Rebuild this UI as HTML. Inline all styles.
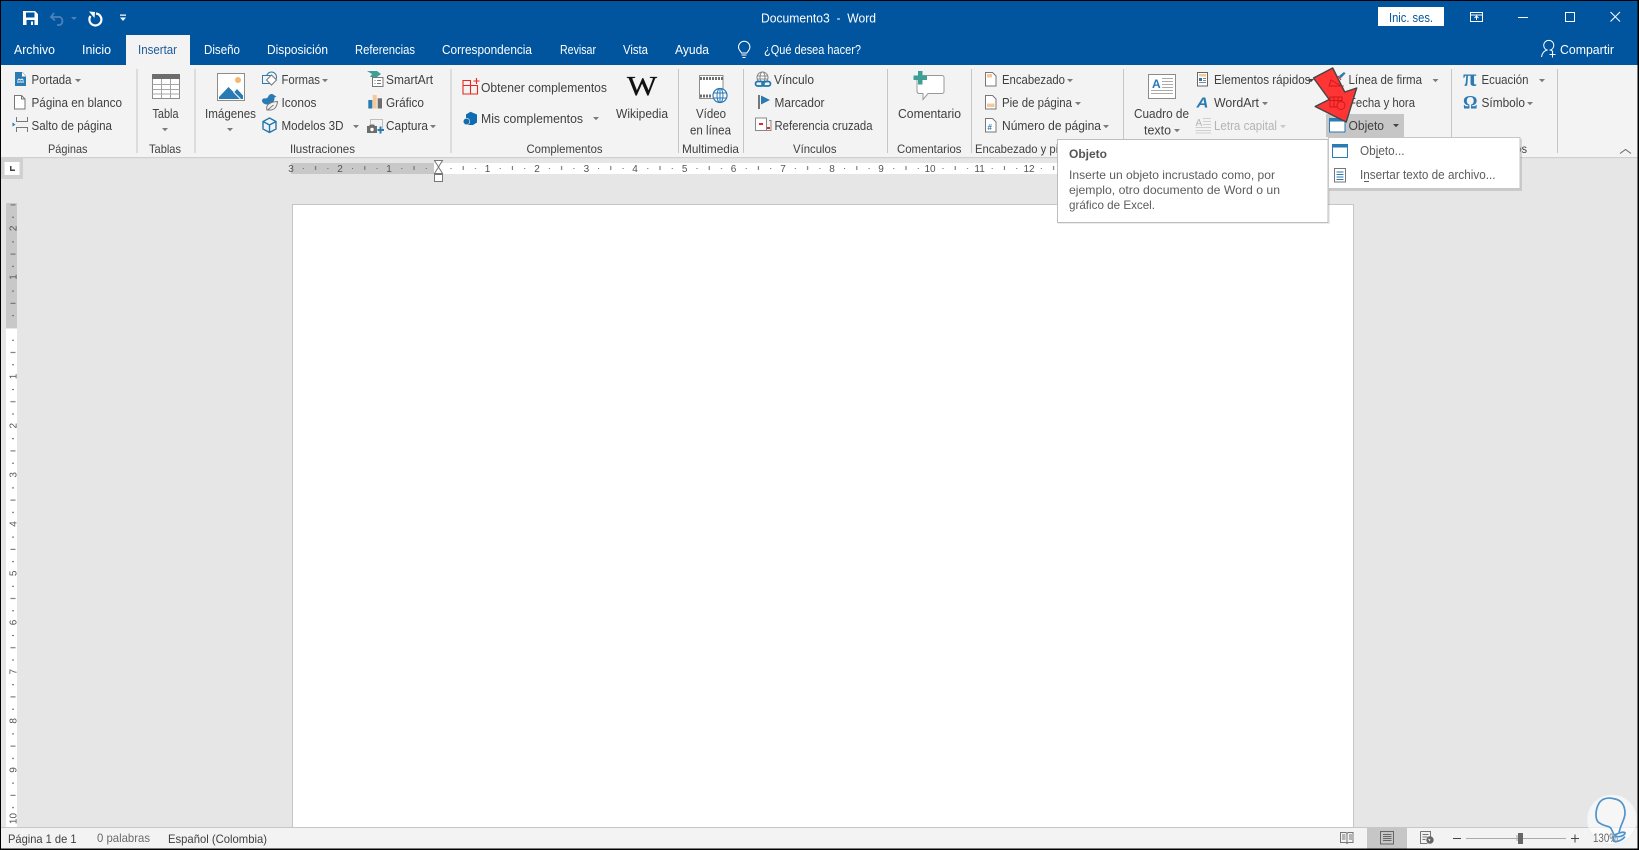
<!DOCTYPE html>
<html lang="es"><head><meta charset="utf-8"><title>Documento3 - Word</title>
<style>
html,body{margin:0;padding:0;background:#000;width:1639px;height:850px;overflow:hidden}
svg{display:block;filter:blur(.3px)}
text{font-family:"Liberation Sans",sans-serif;font-size:12.5px;fill:#404040}
.w text{fill:#fff}
.l text{fill:#404040;font-size:12px}
.d{fill:#7b7b7b}
.g{stroke:#777;fill:#fff;stroke-width:1}
.r text{font-size:10px;fill:#555;text-anchor:middle}
</style></head><body>
<svg xmlns="http://www.w3.org/2000/svg" width="1639" height="850" viewBox="0 0 1639 850">
<defs>
<pattern id="ht" patternUnits="userSpaceOnUse" x="438.5" y="160" width="49.2" height="20">
<rect x="12" y="8" width="1" height="1" fill="#666"/><rect x="24.2" y="6" width="1" height="4" fill="#666"/><rect x="36.5" y="8" width="1" height="1" fill="#666"/>
</pattern>
<pattern id="vt" patternUnits="userSpaceOnUse" x="0" y="327.8" width="20" height="49.2">
<rect x="12" y="12" width="2" height="1" fill="#666"/><rect x="10.5" y="24.2" width="5" height="1" fill="#666"/><rect x="12" y="36.5" width="2" height="1" fill="#666"/>
</pattern>
</defs>

<!-- base -->
<rect x="0" y="0" width="1639" height="850" fill="#000"/>
<rect x="1" y="1" width="1636.5" height="847.5" fill="#e6e6e6"/>
<rect x="1" y="1" width="1636.5" height="64" fill="#01559f"/>
<rect x="1" y="65" width="1636.5" height="92" fill="#f3f3f3"/>
<rect x="1" y="157" width="1636.5" height="1.2" fill="#cfcfcf"/>
<rect x="126" y="35" width="64" height="31" fill="#f3f3f3"/>

<!-- QAT -->
<path d="M23 11h12l3 3v11H23z" fill="#fff"/><rect x="26" y="12.5" width="8.5" height="5" fill="#01559f"/><rect x="26.5" y="20" width="8" height="5" fill="#01559f"/><rect x="31" y="21.5" width="2" height="3.5" fill="#fff"/>
<path d="M54 13l-3 4 4 3.5M52 17h8a4.5 4.500 0 0 1 0 8h-3" fill="none" stroke="#4f81b9" stroke-width="1.8"/>
<path d="M71 17h6l-3 3z" fill="#4f81b9"/>
<path d="M96 13.5a6 6 0 1 1-5.500 2.500" fill="none" stroke="#fff" stroke-width="2.200"/><path d="M89 11.500l6 .5-.5 6z" fill="#fff"/>
<path d="M120 14.500h6v1.300h-6zM120 17.500h6l-3 3.500z" fill="#fff"/>

<!-- tabs -->
<g class="w">
<text x="14" y="54" textLength="41" lengthAdjust="spacingAndGlyphs">Archivo</text>
<text x="82" y="54" textLength="29" lengthAdjust="spacingAndGlyphs">Inicio</text>
<text x="204" y="54" textLength="36" lengthAdjust="spacingAndGlyphs">Diseño</text>
<text x="267" y="54" textLength="61" lengthAdjust="spacingAndGlyphs">Disposición</text>
<text x="355" y="54" textLength="60" lengthAdjust="spacingAndGlyphs">Referencias</text>
<text x="442" y="54" textLength="90" lengthAdjust="spacingAndGlyphs">Correspondencia</text>
<text x="560" y="54" textLength="36" lengthAdjust="spacingAndGlyphs">Revisar</text>
<text x="623" y="54" textLength="25" lengthAdjust="spacingAndGlyphs">Vista</text>
<text x="675" y="54" textLength="34" lengthAdjust="spacingAndGlyphs">Ayuda</text>
<text x="764" y="54" textLength="97" lengthAdjust="spacingAndGlyphs">¿Qué desea hacer?</text>
<text x="761" y="22.500" textLength="115" lengthAdjust="spacingAndGlyphs" xml:space="preserve">Documento3  -  Word</text>
<text x="1560" y="54" textLength="54" lengthAdjust="spacingAndGlyphs">Compartir</text>
</g>
<text x="138" y="54" textLength="39" lengthAdjust="spacingAndGlyphs" style="fill:#1c5a9c">Insertar</text>

<path d="M741.500 53c-1-2-3-3-3-6a5.700 5.700 0 0 1 11.400 0c0 3-2 4-3 6zM741.500 55h5M742.500 57.500h3" fill="none" stroke="#fff" stroke-width="1"/>

<!-- top-right -->
<rect x="1378" y="7" width="66" height="19" fill="#fff"/>
<text x="1389" y="22" textLength="44" lengthAdjust="spacingAndGlyphs" style="fill:#01559f">Inic. ses.</text>
<path d="M1470.500 12.500h12v9h-12zM1470.500 15h12" fill="none" stroke="#fff"/><path d="M1476.500 20v-3.500M1474.500 18l2-2 2 2" fill="none" stroke="#fff"/>
<rect x="1518" y="17" width="10" height="1" fill="#fff"/>
<rect x="1565.500" y="12.500" width="9" height="9" fill="none" stroke="#fff"/>
<path d="M1610.500 12l9.500 9.500M1620 12l-9.500 9.500" stroke="#fff" fill="none"/>
<path d="M1541.500 57c1-5 3-6 5.500-7a5 5 0 1 1 3.500 0c1 .3 2 1 2.500 1.700" fill="none" stroke="#fff"/><path d="M1549.500 54.500h6M1552.500 51.500v6" stroke="#fff" fill="none"/>

<!-- separators -->
<g fill="#c6c6c6">
<rect x="136.500" y="69" width="1" height="84"/><rect x="194.500" y="69" width="1" height="84"/><rect x="450.500" y="69" width="1" height="84"/><rect x="678" y="69" width="1" height="84"/><rect x="743" y="69" width="1" height="84"/><rect x="887" y="69" width="1" height="84"/><rect x="971" y="69" width="1" height="84"/><rect x="1123" y="69" width="1" height="84"/><rect x="1451" y="69" width="1" height="84"/><rect x="1557" y="69" width="1" height="84"/>
</g>

<!-- Ribbon text -->
<g>
<text x="31.500" y="84" textLength="40" lengthAdjust="spacingAndGlyphs">Portada</text>
<text x="31.500" y="107" textLength="90.500" lengthAdjust="spacingAndGlyphs">Página en blanco</text>
<text x="31.500" y="130" textLength="80.500" lengthAdjust="spacingAndGlyphs">Salto de página</text>
<text x="152.500" y="118" textLength="26" lengthAdjust="spacingAndGlyphs">Tabla</text>
<text x="205" y="118" textLength="51" lengthAdjust="spacingAndGlyphs">Imágenes</text>
<text x="281.500" y="84" textLength="38.500" lengthAdjust="spacingAndGlyphs">Formas</text>
<text x="281.500" y="107" textLength="35" lengthAdjust="spacingAndGlyphs">Iconos</text>
<text x="281.500" y="130" textLength="62" lengthAdjust="spacingAndGlyphs">Modelos 3D</text>
<text x="386" y="84" textLength="47" lengthAdjust="spacingAndGlyphs">SmartArt</text>
<text x="386" y="107" textLength="38" lengthAdjust="spacingAndGlyphs">Gráfico</text>
<text x="386" y="130" textLength="42" lengthAdjust="spacingAndGlyphs">Captura</text>
<text x="481" y="92" textLength="126" lengthAdjust="spacingAndGlyphs">Obtener complementos</text>
<text x="481" y="123" textLength="102" lengthAdjust="spacingAndGlyphs">Mis complementos</text>
<text x="616" y="118" textLength="52" lengthAdjust="spacingAndGlyphs">Wikipedia</text>
<text x="627" y="95" textLength="30" lengthAdjust="spacingAndGlyphs" style="font-family:'Liberation Serif',serif;font-size:27px;fill:#111;stroke:#111;stroke-width:.35">W</text>
<text x="696" y="118" textLength="30" lengthAdjust="spacingAndGlyphs">Vídeo</text>
<text x="690" y="134.500" textLength="41" lengthAdjust="spacingAndGlyphs">en línea</text>
<text x="774" y="84" textLength="40" lengthAdjust="spacingAndGlyphs">Vínculo</text>
<text x="774.500" y="107" textLength="50" lengthAdjust="spacingAndGlyphs">Marcador</text>
<text x="774.500" y="130" textLength="98" lengthAdjust="spacingAndGlyphs">Referencia cruzada</text>
<text x="898" y="118" textLength="63" lengthAdjust="spacingAndGlyphs">Comentario</text>
<text x="1002" y="84" textLength="63" lengthAdjust="spacingAndGlyphs">Encabezado</text>
<text x="1002" y="107" textLength="70" lengthAdjust="spacingAndGlyphs">Pie de página</text>
<text x="1002" y="130" textLength="99" lengthAdjust="spacingAndGlyphs">Número de página</text>
<text x="1134" y="118" textLength="55" lengthAdjust="spacingAndGlyphs">Cuadro de</text>
<text x="1144" y="134.500" textLength="27" lengthAdjust="spacingAndGlyphs">texto</text>
<text x="1214" y="84" textLength="96.500" lengthAdjust="spacingAndGlyphs">Elementos rápidos</text>
<text x="1214" y="107" textLength="45" lengthAdjust="spacingAndGlyphs">WordArt</text>
<text x="1214" y="130" textLength="63" lengthAdjust="spacingAndGlyphs" style="fill:#b4b4b4">Letra capital</text>
<text x="1348.500" y="84" textLength="73.500" lengthAdjust="spacingAndGlyphs">Línea de firma</text>
<text x="1349" y="107" textLength="66" lengthAdjust="spacingAndGlyphs">Fecha y hora</text>
<text x="1481.500" y="84" textLength="47" lengthAdjust="spacingAndGlyphs">Ecuación</text>
<text x="1481.500" y="107" textLength="43.500" lengthAdjust="spacingAndGlyphs">Símbolo</text>
</g>

<!-- labels -->
<g class="l">
<text x="48" y="153" textLength="39.500" lengthAdjust="spacingAndGlyphs">Páginas</text>
<text x="149" y="153" textLength="32" lengthAdjust="spacingAndGlyphs">Tablas</text>
<text x="290" y="153" textLength="65" lengthAdjust="spacingAndGlyphs">Ilustraciones</text>
<text x="526.500" y="153" textLength="76" lengthAdjust="spacingAndGlyphs">Complementos</text>
<text x="682" y="153" textLength="57" lengthAdjust="spacingAndGlyphs">Multimedia</text>
<text x="793" y="153" textLength="43.500" lengthAdjust="spacingAndGlyphs">Vínculos</text>
<text x="897" y="153" textLength="64.500" lengthAdjust="spacingAndGlyphs">Comentarios</text>
<text x="975" y="153" textLength="142" lengthAdjust="spacingAndGlyphs">Encabezado y pie de página</text>
<text x="1482" y="153" textLength="45" lengthAdjust="spacingAndGlyphs">Símbolos</text>
</g>

<!-- dropdown arrows -->
<g class="d">
<path d="M75 79h6l-3 3.200z"/><path d="M162 128h6l-3 3.200z"/><path d="M227 128h6l-3 3.200z"/><path d="M322 79h6l-3 3.200z"/><path d="M353 125h6l-3 3.200z"/><path d="M430 125h6l-3 3.200z"/><path d="M593 117h6l-3 3.200z"/><path d="M1067 79h6l-3 3.200z"/><path d="M1075 102h6l-3 3.200z"/><path d="M1103 125h6l-3 3.200z"/><path d="M1174 129h6l-3 3.200z"/><path d="M1262 102h6l-3 3.200z"/><path d="M1432.500 79h6l-3 3.200z"/><path d="M1539 79h6l-3 3.200z"/><path d="M1527 102h6l-3 3.200z"/>
<path d="M1280 125h6l-3 3.200z" style="fill:#c8c8c8"/>
<path d="M1308 79h6l-3 3.200z" style="fill:#444"/>
</g>

<!-- Páginas icons -->
<path d="M15 72h7.500l3.500 4v10H15z" fill="#2a7ab3"/><path d="M22 72v4.500h4" fill="#fff"/><path d="M17.500 80.500l1.500-1.500 1.500 1 1.500-1 1.500 1.500" fill="none" stroke="#fff"/><rect x="17" y="81.500" width="7" height="1" fill="#fff"/>
<path d="M14.500 95.500h7l3.500 3.500v10H14.500zM21.500 95.500V99H25" class="g"/>
<path d="M16.500 117v4.500H27.500V117M16.500 132v-4.500H27.500V132" fill="none" stroke="#777"/><path d="M12.500 122.500l3 2-3 2z" fill="#2a7ab3"/>

<!-- Tabla -->
<rect x="152.500" y="74.500" width="27" height="24" fill="#fff" stroke="#8c8c8c"/><rect x="152" y="74" width="28" height="5" fill="#6d6d6d"/>
<path d="M152.500 84.500h27M152.500 89.500h27M152.500 94h27M161.500 79v19M170.500 79v19" stroke="#a5a5a5" fill="none"/>

<!-- Imágenes -->
<rect x="217.500" y="73.500" width="27" height="27" fill="#fff" stroke="#8c8c8c"/><circle cx="238" cy="80" r="3" fill="#f5b771"/>
<path d="M219 99v-2l9.500-10 5.500 5.500 3-3.500 6 6.500v3.500z" fill="#2a7ab3"/><path d="M233.500 92l7 7" stroke="#fff" fill="none"/>

<!-- Formas -->
<circle cx="271.500" cy="77" r="5" fill="none" stroke="#2a7ab3"/><rect x="262.500" y="75.500" width="9" height="8" fill="#f3f3f3" stroke="#2a7ab3"/>
<path d="M271.500 75l5 5-5 5-5-5z" fill="#fff" stroke="#777"/>

<!-- Iconos -->
<path d="M262 101c0-2 1-3 4-2.500 1-.5 2-1 2.500-2.500a3.500 3.500 0 0 1 6-.5l2 1-2 1c0 3-1 6-5 7-4 .5-7-1-7.500-3.500z" fill="#2a7ab3"/>
<path d="M267 110c-1.500-4 1.500-8 10.500-8.500-.5 5-3 8.500-7 8.500-1.500 0-2.500 0-3.500 0zM267.500 110l6-5" fill="#f3f3f3" stroke="#777"/>

<!-- Modelos 3D -->
<path d="M269.500 118l6.500 3.500v7.500l-6.500 3.500-6.500-3.500v-7.500zM263 121.500l6.500 3.500 6.500-3.500M269.500 125v7.500" fill="none" stroke="#1f76ad" stroke-width="1.400"/>

<!-- SmartArt -->
<path d="M367 71h10l4 3-4 3h-7l2-3z" fill="#3f9f95"/><rect x="372.500" y="77.500" width="10.500" height="9" fill="#fff" stroke="#777"/><path d="M374.500 80.500h1M374.500 83.500h1M377 80.500h4M377 83.500h4" stroke="#777"/>

<!-- Gráfico -->
<rect x="368.300" y="100" width="4" height="8.500" fill="#2a7ab3"/><rect x="372.700" y="95" width="4" height="13.500" fill="#f5c89a"/><rect x="377.700" y="98.300" width="4.300" height="10.200" fill="#6d6d6d"/>

<!-- Captura -->
<rect x="370.500" y="119.500" width="12" height="10" fill="none" stroke="#888" stroke-dasharray="1 1"/>
<path d="M367 126h2l1-1.500h4l1 1.500h2v7h-10z" fill="#6d6d6d"/><circle cx="372" cy="129.500" r="1.700" fill="#fff"/>
<path d="M380.500 126.500v7M377.500 130h6.500" stroke="#2a7ab3" stroke-width="2"/>

<!-- Obtener -->
<path d="M463 85.500h7.500v8.500H463zM470.500 85.500h7V94h-7zM463 85.500v-5h7.500v5M473.500 81h6M476.500 78v6" fill="none" stroke="#e8281e" stroke-width="1.100"/>

<!-- Mis compl -->
<path d="M470.500 111.800l6.500 2.700v8l-4 2.500h-5v-5l-2-1v-4.500z" fill="#0f6cb0"/><circle cx="466.500" cy="121.500" r="3.300" fill="#0f6cb0" stroke="#f3f3f3" stroke-width=".6"/>

<!-- Vídeo -->
<rect x="699.500" y="75.500" width="23.500" height="23" fill="#fff" stroke="#8c8c8c"/>
<path d="M700 78.500h23M700 96h12" stroke="#6d6d6d" stroke-width="3" stroke-dasharray="2 1" fill="none"/>
<circle cx="720" cy="95.500" r="7" fill="#fff" stroke="#2a7ab3" stroke-width="1.200"/><ellipse cx="720" cy="95.500" rx="3" ry="7" fill="none" stroke="#2a7ab3"/><path d="M713 93h14M713 98h14M720 88.500v14" stroke="#2a7ab3" fill="none"/>

<!-- Vínculo -->
<circle cx="762.500" cy="77.500" r="5.500" fill="#fff" stroke="#888"/><ellipse cx="762.500" cy="77.500" rx="2.500" ry="5.500" fill="none" stroke="#888"/><path d="M757 76h11M757 79h11" stroke="#888" fill="none"/>
<rect x="755.500" y="81.500" width="8.500" height="4.500" rx="2.200" fill="#f3f3f3" stroke="#1f76ad" stroke-width="1.700"/><rect x="762" y="81.500" width="8.500" height="4.500" rx="2.200" fill="none" stroke="#1f76ad" stroke-width="1.700"/>

<!-- Marcador -->
<rect x="758" y="95" width="2" height="14" fill="#777"/><path d="M761 95.500l9 4.500-9 4.500z" fill="#2a7ab3"/>

<!-- Referencia -->
<path d="M763 130.500h8v-10h-2" fill="none" stroke="#888"/><rect x="755.500" y="118" width="11" height="12.500" fill="#fff" stroke="#888"/>
<rect x="759" y="123" width="4" height="2" fill="#e8281e"/><rect x="767" y="127" width="3" height="2" fill="#e8281e"/>

<!-- Comentario -->
<path d="M919 75.500h23a2 2 0 0 1 2 2v14a2 2 0 0 1-2 2h-14l-5 6v-6h-4a2.500 2.500 0 0 1-2-2v-14a2 2 0 0 1 2-2z" fill="#fff" stroke="#999"/>
<path d="M918 71h4.500v4.500h4.500V80h-4.500v4.500H918V80h-4.500v-4.500h4.500z" fill="#3f9f95"/>

<!-- Encabezado etc -->
<path d="M985.500 72.500h7l3.500 3.500v10h-10.500z" class="g"/><rect x="987" y="74" width="5" height="3.500" fill="#f5c89a"/>
<path d="M985.500 95.500h7l3.500 3.500v10h-10.500z" class="g"/><rect x="987" y="103.500" width="7.500" height="3.500" fill="#f5c89a"/>
<path d="M985.500 118.500h7l3.500 3.500v10h-10.500z" class="g"/><text x="987.500" y="130" style="font-size:8px;font-weight:bold;fill:#2a7ab3">#</text>

<!-- Cuadro de texto -->
<rect x="1148.500" y="74.500" width="27" height="24" fill="#fff" stroke="#8c8c8c"/>
<text x="1152" y="88" style="font-size:12px;font-weight:bold;fill:#2a7ab3">A</text>
<path d="M1162 78.500h11M1162 81.500h11M1162 84.500h11M1162 87.500h11M1151 90.500h22M1151 93.500h22" stroke="#aaa" fill="none"/>

<!-- Elementos rápidos -->
<rect x="1197.500" y="72.500" width="10" height="13.500" fill="#fff" stroke="#666"/><rect x="1199" y="74" width="7" height="2.500" fill="#f5c89a"/><rect x="1199" y="78" width="3" height="3" fill="#2a7ab3"/><path d="M1203 78.500h3M1203 80.500h3M1199 82.500h7" stroke="#888" fill="none"/>

<!-- WordArt -->
<text x="1196.500" y="107.500" textLength="12" lengthAdjust="spacingAndGlyphs" style="font-size:15px;font-style:italic;font-weight:bold;fill:#2a7ab3">A</text>

<!-- Letra capital -->
<text x="1195.500" y="126" style="font-size:10px;fill:#b4b4b4">A</text><path d="M1203 118.500h8M1203 121.500h8M1203 124.500h8M1195.500 127.500h15.500M1195.500 130.500h15.500M1195.500 133h15.500" stroke="#cfcfcf" fill="none"/>

<!-- π Ω -->
<text x="1463" y="86" textLength="13.500" lengthAdjust="spacingAndGlyphs" style="font-family:'Liberation Serif',serif;font-size:25px;font-weight:bold;fill:#2a7ab3">π</text>
<text x="1463" y="108.500" textLength="14.500" lengthAdjust="spacingAndGlyphs" style="font-family:'Liberation Serif',serif;font-size:19px;font-weight:bold;fill:#2a7ab3">Ω</text>

<path d="M1620 153.500l5.500-4 5.500 4" fill="none" stroke="#666"/>

<!-- Objeto highlighted -->
<rect x="1326" y="114" width="78" height="23" fill="#c6c6c6"/>
<rect x="1329.500" y="118.500" width="15.500" height="13.500" fill="#fff" stroke="#2a7ab3"/><rect x="1329" y="118" width="16" height="3.500" fill="#2a7ab3"/>
<text x="1348.500" y="130" textLength="35.500" lengthAdjust="spacingAndGlyphs">Objeto</text>
<path d="M1393 124h6l-3 3.200z" fill="#444"/>

<!-- Línea de firma + pencil -->
<path d="M1339 76l5-4 1.500 1.500-5 5z" fill="#2a7ab3"/><path d="M1330 86h14" stroke="#777" fill="none"/>

<!-- ruler horizontal -->
<rect x="291" y="163" width="143" height="11" fill="#c8c8c8"/>
<rect x="434" y="163" width="780" height="11" fill="#fff"/>
<rect x="291" y="160" width="920" height="20" fill="url(#ht)"/>
<g class="r">
<text x="291" y="172">3</text><text x="340" y="172">2</text><text x="389" y="172">1</text>
<text x="487.500" y="172">1</text><text x="537" y="172">2</text><text x="586.400" y="172">3</text><text x="635" y="172">4</text><text x="684.600" y="172">5</text><text x="733.500" y="172">6</text><text x="783" y="172">7</text><text x="832" y="172">8</text><text x="881" y="172">9</text><text x="930" y="172">10</text><text x="979.600" y="172">11</text><text x="1029" y="172">12</text>
</g>
<path d="M434.500 160.500h8l-4 6.500 4 6.500h-8l4-6.500zM434.500 174.500h8v7h-8z" fill="#fff" stroke="#777"/>

<!-- tab selector -->
<rect x="1" y="158" width="22" height="21" fill="#d0d0d0"/><rect x="4.500" y="162" width="15" height="13" fill="#fff"/><path d="M10 166v5h5v-1.500h-3.500V166z" fill="#444"/>

<!-- ruler vertical -->
<rect x="6" y="203" width="11" height="125" fill="#c8c8c8"/>
<rect x="6" y="329" width="11" height="498" fill="#fff"/>
<rect x="0" y="203" width="20" height="624" fill="url(#vt)"/>
<g class="r">
<text transform="translate(16.500 228.300) rotate(-90)">2</text><text transform="translate(16.500 277) rotate(-90)">1</text>
<text transform="translate(16.500 376.500) rotate(-90)">1</text><text transform="translate(16.500 425.700) rotate(-90)">2</text><text transform="translate(16.500 474.900) rotate(-90)">3</text><text transform="translate(16.500 524) rotate(-90)">4</text><text transform="translate(16.500 573.300) rotate(-90)">5</text><text transform="translate(16.500 622.500) rotate(-90)">6</text><text transform="translate(16.500 671.700) rotate(-90)">7</text><text transform="translate(16.500 720.900) rotate(-90)">8</text><text transform="translate(16.500 770) rotate(-90)">9</text><text transform="translate(16.500 818.500) rotate(-90)">10</text>
</g>

<!-- page -->
<rect x="292.500" y="204.500" width="1061" height="640" fill="#fff" stroke="#c6c6c6"/>

<!-- status bar -->
<rect x="1" y="827" width="1636.500" height="21.500" fill="#f3f3f3"/><rect x="1" y="827" width="1636.500" height="1" fill="#c6c6c6"/>
<text x="8" y="843" textLength="68.500" lengthAdjust="spacingAndGlyphs" style="font-size:12px">Página 1 de 1</text>
<text x="97" y="842" textLength="53" lengthAdjust="spacingAndGlyphs" style="font-size:12px;fill:#6a6a6a">0 palabras</text>
<text x="168" y="843" textLength="99" lengthAdjust="spacingAndGlyphs" style="font-size:12px">Español (Colombia)</text>
<path d="M1340.500 832.500h5.500l1 1 1-1h5v10h-5l-1 1-1-1h-5.500zM1347 833.500v9.500M1342 835h3.500M1342 837h3.500M1342 839h3.500M1349 835h3M1349 837h3M1349 839h3" fill="none" stroke="#777"/>
<rect x="1367" y="828" width="40" height="20.500" fill="#c6c6c6"/>
<path d="M1380.500 831.500h13v12.500h-13zM1383 834.500h8.500M1383 836.500h8.500M1383 838.500h8.500M1383 840.500h8.500" fill="none" stroke="#666"/>
<path d="M1420.500 831.500h10v6M1420.500 831.500v12h7M1422.500 834.500h6M1422.500 837h5M1422.500 839.500h3" fill="none" stroke="#777"/><circle cx="1430" cy="840" r="3.700" fill="#666"/><path d="M1428 838.500l2.500 1-1 2z" fill="#f3f3f3"/>
<rect x="1453" y="838" width="8" height="1" fill="#444"/>
<rect x="1466" y="838" width="100" height="1" fill="#aaa"/><rect x="1516.500" y="835" width="1" height="6" fill="#aaa"/><rect x="1518" y="833" width="5" height="11" fill="#666"/>
<path d="M1571 838.500h8M1575 834.500v8" stroke="#444" fill="none"/>

<!-- tooltip -->
<rect x="1058" y="140" width="272" height="84" fill="#000" opacity=".08"/>
<rect x="1057.500" y="139.500" width="270.500" height="83" fill="#fff" stroke="#bdbdbd"/>
<text x="1069" y="158" textLength="38" lengthAdjust="spacingAndGlyphs" style="font-weight:bold;font-size:12px;fill:#555">Objeto</text>
<text x="1069" y="179" textLength="206" lengthAdjust="spacingAndGlyphs" style="font-size:12px;fill:#5c5c5c">Inserte un objeto incrustado como, por</text>
<text x="1069" y="194" textLength="211" lengthAdjust="spacingAndGlyphs" style="font-size:12px;fill:#5c5c5c">ejemplo, otro documento de Word o un</text>
<text x="1069" y="209" textLength="86" lengthAdjust="spacingAndGlyphs" style="font-size:12px;fill:#5c5c5c">gráfico de Excel.</text>

<!-- menu -->
<rect x="1329" y="139" width="193" height="52" fill="#000" opacity=".12"/>
<rect x="1328.500" y="137.500" width="191.500" height="51" fill="#fff" stroke="#c6c6c6"/>
<rect x="1332.500" y="144.500" width="15" height="13" fill="#fff" stroke="#2a7ab3"/><rect x="1332" y="144" width="16" height="3.500" fill="#2a7ab3"/>
<text x="1360" y="155" textLength="44.500" lengthAdjust="spacingAndGlyphs" style="fill:#5c5c5c">Objeto...</text><rect x="1376" y="157" width="4" height="1" fill="#5c5c5c"/>
<rect x="1334.500" y="168.500" width="11" height="13.500" fill="#fff" stroke="#777"/><path d="M1336.500 172h7M1336.500 174.500h7M1336.500 177h7M1336.500 179.500h7" stroke="#2a7ab3" fill="none"/>
<text x="1360" y="179" textLength="135.500" lengthAdjust="spacingAndGlyphs" style="fill:#5c5c5c">Insertar texto de archivo...</text><rect x="1364" y="181" width="5" height="1" fill="#5c5c5c"/>

<!-- red arrow -->
<path d="M1313.500 78l19.200-10 12 24 12-4-10.500 34-31-15.500 14-7z" fill="#ff3535" stroke="#444" stroke-width="1.400" stroke-linejoin="round"/>
<path d="M1331 80l-2 6h12zM1338 76l3 4" fill="none" stroke="#d01818"/>
<path d="M1330 97h12v10h-12zM1330 100.500h12M1334 97v10M1338 97v10" fill="none" stroke="#d01818"/><circle cx="1341" cy="105.500" r="4" fill="#ff3535" stroke="#d01818"/>

<!-- watermark -->
<circle cx="1612" cy="819.500" r="25" fill="#fff" fill-opacity=".62" stroke="#dfe9f2" stroke-opacity=".7"/>
<text x="1593" y="842" textLength="25" lengthAdjust="spacingAndGlyphs" style="font-size:12px;fill:#666">130%</text>
<path d="M1619 833.300C1620 825 1625 820 1625 813.300C1625 805 1621 800 1615 799C1610 797.500 1606 798 1603.300 799.300C1598 802 1596 809 1596 815C1596 819 1597 822 1600 823.300C1604 826 1608 826 1610 827.300C1612 829 1612 831 1613.300 833.300C1614 835 1616 836.700 1618.300 836.700C1621 836.700 1625 835 1625 832.700C1623 831.500 1618 833 1615 835C1612.500 837 1612.500 841 1615 841.700C1619 842 1623 839 1625 836.700" fill="none" stroke="#4f94cc" stroke-width="1.700"/>
</svg>
</body></html>
